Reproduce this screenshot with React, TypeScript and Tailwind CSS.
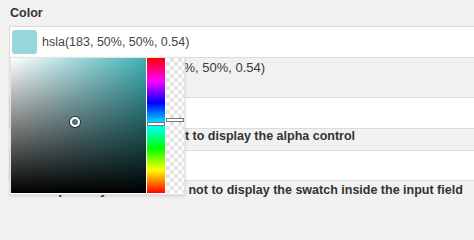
import React from "react";

function Picker() {
  return (
    <div className="absolute left-[10px] top-[57px] flex gap-px border border-[#e4e4e4] bg-white pb-px shadow-[0_1px_3px_rgba(0,0,0,0.15)]">
      <div className="relative w-[135px] h-[135px] bg-[#3fb1b6]">
        <div className="absolute inset-0 bg-[linear-gradient(to_right,#fff,rgba(255,255,255,0))]" />
        <div className="absolute inset-0 bg-[linear-gradient(to_bottom,rgba(0,0,0,0),#000)]" />
        <div className="absolute left-[59px] top-[59px] w-[10px] h-[10px] rounded-full border-2 border-white shadow-[0_0_0_1px_rgba(0,0,0,0.55)]" />
      </div>
      <div className="relative w-[18px] h-[135px] bg-[linear-gradient(to_bottom,#f00_0%,#f0f_17%,#00f_33%,#0ff_50%,#0f0_67%,#ff0_83%,#f00_100%)]">
        <div className="absolute left-0 right-0 top-[64px] h-[4px] border border-[#777] bg-white" />
      </div>
      <div className="relative w-[18px] h-[135px] bg-[image:repeating-conic-gradient(#e3e3e3_0%_25%,#fff_0%_50%)] bg-[length:8px_8px]">
        <div className="absolute left-0 right-0 top-[60px] h-[4px] border border-[#777] bg-white" />
      </div>
    </div>
  );
}

export default function App() {
  return (
    <div className="relative h-screen min-h-[203px] overflow-hidden bg-[#f1f1f1] font-['Liberation_Sans',Arial,sans-serif] text-[12.5px] text-[#333]">
      <div className="w-[560px] pl-[9px] pt-[6px]">
        <label className="block pl-px font-bold leading-[14px]">Color</label>
        <div className="mt-[6px] flex h-[32px] items-center gap-[5px] border border-[#dcdcdc] bg-white pl-[2px]">
          <span className="h-[24px] w-[25px] rounded-[3px] bg-[#97d6da]" />
          <span className="text-[#444]">hsla(183, 50%, 50%, 0.54)</span>
        </div>
        <p className="mt-[2px] pl-px text-[13px] leading-[15px] text-[#3a3a3a]">Selected value is hsla(183, 50%, 50%, 0.54)</p>
        <div className="mt-[22px] h-[32px] border border-[#dcdcdc] bg-white" />
        <label className="block pl-[3px] font-bold leading-[14px]">Use set this option to true not to display the alpha control</label>
        <div className="mt-[7px] h-[31px] border border-[#dcdcdc] bg-white" />
        <label className="mt-[2px] block pl-px font-bold leading-[14px]">Set an option by default to be not to display the swatch inside the input field</label>
      </div>
      <Picker />
    </div>
  );
}
